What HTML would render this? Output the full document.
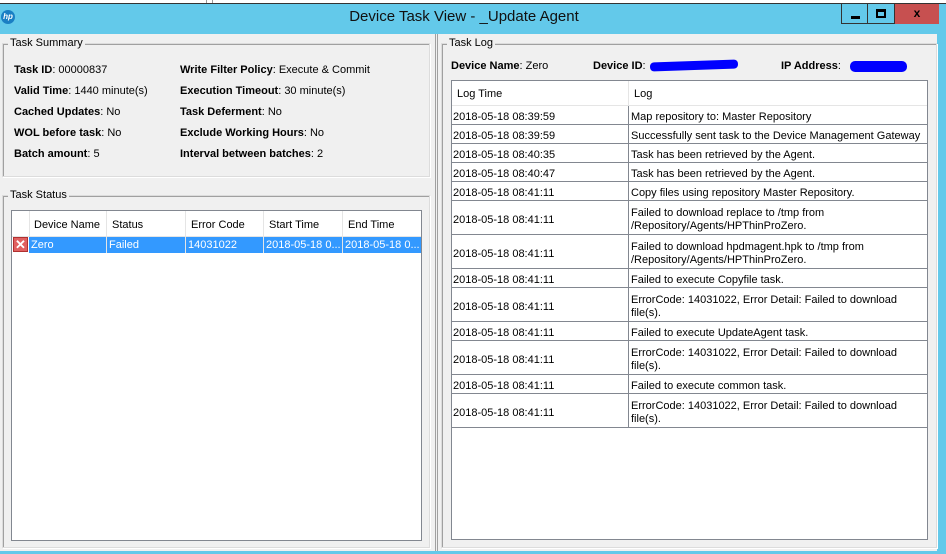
<!DOCTYPE html>
<html><head><style>
*{box-sizing:border-box;margin:0;padding:0}
body{width:946px;height:554px;background:#63c9ea;font-family:"Liberation Sans",Arial,sans-serif;font-size:11px;color:#000;position:relative;overflow:hidden}
.a{position:absolute}
.grp{position:absolute;border:1px solid #dcdcdc;box-shadow:inset 1px 1px 0 #a0a0a0,1px 1px 0 #fff}
.grp>.lg{position:absolute;top:-7px;left:5px;background:#f0f0f0;padding:0 2px;font-size:11px}
b{font-weight:bold}
.cell{position:absolute;white-space:nowrap;overflow:hidden}
.lr>div>span{margin-top:2px}
</style></head><body>
<div class="a" style="left:0;top:0;width:946px;height:3px;background:#fff"></div>
<div class="a" style="left:206px;top:0;width:1px;height:3px;background:#999"></div>
<div class="a" style="left:212px;top:0;width:1px;height:3px;background:#999"></div>
<div class="a" style="left:0;top:3px;width:946px;height:1px;background:#333"></div>
<div class="a" style="left:1px;top:10px;width:14px;height:14px;border-radius:50%;background:#1a7fc4;color:#fff;font-size:8px;font-style:italic;font-weight:bold;text-align:center;line-height:14px">hp</div>
<div class="a" style="left:0;top:8px;width:946px;text-align:center;font-size:15px;color:#111;padding-right:18px">Device Task View - _Update Agent</div>
<div class="a" style="left:841px;top:4px;width:27px;height:20px;border:1px solid #333;border-top:none;background:#63c9ea"><div class="a" style="left:9px;top:12px;width:9px;height:3px;background:#000"></div></div>
<div class="a" style="left:868px;top:4px;width:27px;height:20px;border:1px solid #333;border-top:none;border-left:none;background:#63c9ea"><div class="a" style="left:8px;top:5px;width:10px;height:9px;border:2px solid #000;border-top-width:3px"></div></div>
<div class="a" style="left:895px;top:4px;width:44px;height:20px;background:#c75050;color:#000;font-weight:bold;font-size:12px;text-align:center;line-height:18px">x</div>
<div class="a" style="left:0;top:34px;width:937px;height:517px;background:#f0f0f0"></div>
<div class="a" style="left:435px;top:34px;width:1px;height:517px;background:#a0a0a0"></div>
<div class="a" style="left:437px;top:34px;width:1px;height:517px;background:#a0a0a0"></div>

<div class="grp" style="left:2px;top:43px;width:428px;height:134px"><span class="lg">Task Summary</span></div>
<div class="a" style="left:14px;top:60px;line-height:21px">
<div><b>Task ID</b>: 00000837</div>
<div><b>Valid Time</b>: 1440 minute(s)</div>
<div><b>Cached Updates</b>: No</div>
<div><b>WOL before task</b>: No</div>
<div><b>Batch amount</b>: 5</div>
</div>
<div class="a" style="left:180px;top:60px;line-height:21px">
<div><b>Write Filter Policy</b>: Execute &amp; Commit</div>
<div><b>Execution Timeout</b>: 30 minute(s)</div>
<div><b>Task Deferment</b>: No</div>
<div><b>Exclude Working Hours</b>: No</div>
<div><b>Interval between batches</b>: 2</div>
</div>

<div class="grp" style="left:2px;top:195px;width:428px;height:353px"><span class="lg">Task Status</span></div>
<div class="a" style="left:11px;top:210px;width:411px;height:331px;background:#fff;border:1px solid #828790"></div>
<div class="a" style="left:12px;top:211px;width:409px;height:26px;background:#fff"></div>
<div class="a" style="left:12px;top:236px;width:409px;height:1px;background:#e5e5e5"></div>
<div class="cell" style="left:34px;top:219px">Device Name</div>
<div class="cell" style="left:112px;top:219px">Status</div>
<div class="cell" style="left:191px;top:219px">Error Code</div>
<div class="cell" style="left:269px;top:219px">Start Time</div>
<div class="cell" style="left:348px;top:219px">End Time</div>
<div class="a" style="left:29px;top:211px;width:1px;height:25px;background:#e5e5e5"></div>
<div class="a" style="left:106px;top:211px;width:1px;height:25px;background:#e5e5e5"></div>
<div class="a" style="left:185px;top:211px;width:1px;height:25px;background:#e5e5e5"></div>
<div class="a" style="left:263px;top:211px;width:1px;height:25px;background:#e5e5e5"></div>
<div class="a" style="left:342px;top:211px;width:1px;height:25px;background:#e5e5e5"></div>
<div class="a" style="left:29px;top:237px;width:392px;height:16px;background:#3399ff"></div>
<div class="a" style="left:13px;top:237px;width:15px;height:15px;background:#e06060;border:1px solid #b03030;color:#fff;font-weight:bold;font-size:13px;line-height:13px;text-align:center">✕</div>
<div class="a" style="left:106px;top:237px;width:1px;height:16px;background:#e5e5e5"></div>
<div class="a" style="left:185px;top:237px;width:1px;height:16px;background:#e5e5e5"></div>
<div class="a" style="left:263px;top:237px;width:1px;height:16px;background:#e5e5e5"></div>
<div class="a" style="left:342px;top:237px;width:1px;height:16px;background:#e5e5e5"></div>
<div class="cell" style="left:31px;top:239px;color:#fff">Zero</div>
<div class="cell" style="left:109px;top:239px;color:#fff">Failed</div>
<div class="cell" style="left:188px;top:239px;color:#fff">14031022</div>
<div class="cell" style="left:266px;top:239px;color:#fff">2018-05-18 0...</div>
<div class="cell" style="left:345px;top:239px;color:#fff">2018-05-18 0...</div>

<div class="grp" style="left:441px;top:43px;width:496px;height:505px"><span class="lg">Task Log</span></div>
<div class="a" style="left:451px;top:60px"><b>Device Name</b>: Zero</div>
<div class="a" style="left:593px;top:60px"><b>Device ID</b>:</div>
<div class="a" style="left:650px;top:61px;width:88px;height:9px;background:#0000ff;border-radius:4px;transform:rotate(-2deg)"></div>
<div class="a" style="left:781px;top:60px"><b>IP Address</b>:</div>
<div class="a" style="left:850px;top:61px;width:57px;height:11px;background:#0000ff;border-radius:5px"></div>

<div class="a" style="left:451px;top:80px;width:477px;height:460px;background:#fff;border:1px solid #828790"></div>
<div class="a" style="left:628px;top:81px;width:1px;height:24px;background:#e5e5e5"></div>
<div class="a" style="left:452px;top:105px;width:475px;height:1px;background:#e5e5e5"></div>
<div class="cell" style="left:457px;top:88px">Log Time</div>
<div class="cell" style="left:634px;top:88px">Log</div>
<div class="a" style="left:451px;top:106px;width:477px;height:322px;border:1px solid #828790;border-top:none"></div>
<div class="a" style="left:628px;top:106px;width:1px;height:321px;background:#828790"></div>
<div style="position:absolute;left:0;top:0;font-size:11px;line-height:13px">
<div class="a lr" style="left:452px;top:106px;width:475px">
<div style="height:19px;border-bottom:1px solid #828790;position:relative"><span class="a" style="left:1px;top:3px">2018-05-18 08:39:59</span><span class="a" style="left:179px;top:3px">Map repository to: Master Repository</span></div>
<div style="height:19px;border-bottom:1px solid #828790;position:relative"><span class="a" style="left:1px;top:3px">2018-05-18 08:39:59</span><span class="a" style="left:179px;top:3px;white-space:nowrap">Successfully sent task to the Device Management Gateway</span></div>
<div style="height:19px;border-bottom:1px solid #828790;position:relative"><span class="a" style="left:1px;top:3px">2018-05-18 08:40:35</span><span class="a" style="left:179px;top:3px">Task has been retrieved by the Agent.</span></div>
<div style="height:19px;border-bottom:1px solid #828790;position:relative"><span class="a" style="left:1px;top:3px">2018-05-18 08:40:47</span><span class="a" style="left:179px;top:3px">Task has been retrieved by the Agent.</span></div>
<div style="height:19px;border-bottom:1px solid #828790;position:relative"><span class="a" style="left:1px;top:3px">2018-05-18 08:41:11</span><span class="a" style="left:179px;top:3px">Copy files using repository Master Repository.</span></div>
<div style="height:34px;border-bottom:1px solid #828790;position:relative"><span class="a" style="left:1px;top:11px">2018-05-18 08:41:11</span><span class="a" style="left:179px;top:4px;white-space:nowrap">Failed to download replace to /tmp from<br>/Repository/Agents/HPThinProZero.</span></div>
<div style="height:34px;border-bottom:1px solid #828790;position:relative"><span class="a" style="left:1px;top:11px">2018-05-18 08:41:11</span><span class="a" style="left:179px;top:4px;white-space:nowrap">Failed to download hpdmagent.hpk to /tmp from<br>/Repository/Agents/HPThinProZero.</span></div>
<div style="height:19px;border-bottom:1px solid #828790;position:relative"><span class="a" style="left:1px;top:3px">2018-05-18 08:41:11</span><span class="a" style="left:179px;top:3px">Failed to execute Copyfile task.</span></div>
<div style="height:34px;border-bottom:1px solid #828790;position:relative"><span class="a" style="left:1px;top:11px">2018-05-18 08:41:11</span><span class="a" style="left:179px;top:4px;white-space:nowrap">ErrorCode: 14031022, Error Detail: Failed to download<br>file(s).</span></div>
<div style="height:19px;border-bottom:1px solid #828790;position:relative"><span class="a" style="left:1px;top:3px">2018-05-18 08:41:11</span><span class="a" style="left:179px;top:3px">Failed to execute UpdateAgent task.</span></div>
<div style="height:34px;border-bottom:1px solid #828790;position:relative"><span class="a" style="left:1px;top:11px">2018-05-18 08:41:11</span><span class="a" style="left:179px;top:4px;white-space:nowrap">ErrorCode: 14031022, Error Detail: Failed to download<br>file(s).</span></div>
<div style="height:19px;border-bottom:1px solid #828790;position:relative"><span class="a" style="left:1px;top:3px">2018-05-18 08:41:11</span><span class="a" style="left:179px;top:3px">Failed to execute common task.</span></div>
<div style="height:34px;border-bottom:1px solid #828790;position:relative"><span class="a" style="left:1px;top:11px">2018-05-18 08:41:11</span><span class="a" style="left:179px;top:4px;white-space:nowrap">ErrorCode: 14031022, Error Detail: Failed to download<br>file(s).</span></div>
</div></div>
</body></html>
